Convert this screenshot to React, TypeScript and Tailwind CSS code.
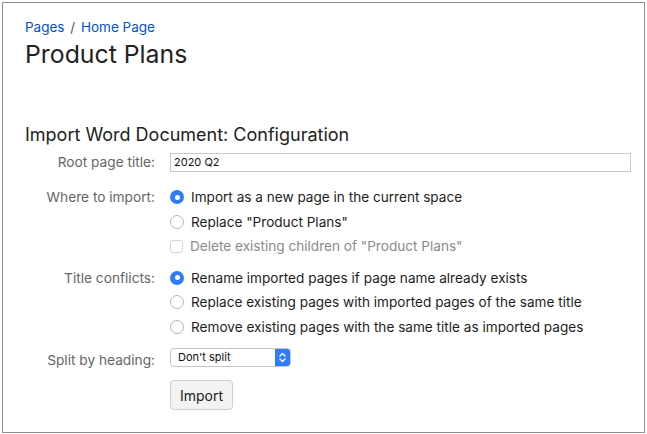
import React from "react";

const font = { fontFamily: "Inter, 'Noto Sans', sans-serif" };

const Radio = ({ checked }: { checked?: boolean }) =>
  checked ? (
    <span className="w-[14px] h-[14px] rounded-full bg-[#2f7cf6] flex items-center justify-center shrink-0">
      <span className="w-[5px] h-[5px] rounded-full bg-white" />
    </span>
  ) : (
    <span className="w-[14px] h-[14px] rounded-full border border-[#b5b5b5] bg-white shrink-0" />
  );

const Option = ({ checked, children }: { checked?: boolean; children: React.ReactNode }) => (
  <div className="flex items-center gap-[7px] h-[24.5px]">
    <Radio checked={checked} />
    <span className="text-[13.6px] text-[#1d1d1d]">{children}</span>
  </div>
);

const Label = ({ children, className = "" }: { children: React.ReactNode; className?: string }) => (
  <div className={`text-[13.7px] text-[#666] text-right ${className}`}>{children}</div>
);

export default function App() {
  return (
    <div className="w-[647px] h-[434px] bg-white p-[2px]" style={font}>
      <div className="h-[431px] w-[643px] border border-[#8f8f8f] pl-[22px] pr-[13px] pt-[15px]">
        <div className="text-[13.5px] text-[#0052cc] leading-[18px]">
          Pages <span className="text-[#555] mx-[2px]">/</span> Home Page
        </div>
        <h1 className="text-[24.8px] text-[#222] leading-[32px] mt-[2px]">Product Plans</h1>

        <h2 className="text-[18px] text-[#222] leading-[24px] mt-[53px]">Import Word Document: Configuration</h2>

        <div className="grid grid-cols-[130px_1fr] gap-x-[15px] mt-[0px]">
          <Label className="leading-[18px] mt-[6px]">Root page title:</Label>
          <div className="mt-[6px]">
            <div className="h-[19px] border border-[#c9c9c9] bg-white text-[11px] leading-[17px] pl-[3px] text-[#111]">
              2020 Q2
            </div>
          </div>

          <Label className="leading-[24.5px] mt-[13px]">Where to import:</Label>
          <div className="mt-[13px]">
            <Option checked>Import as a new page in the current space</Option>
            <Option>Replace "Product Plans"</Option>
            <div className="flex items-center gap-[7px] h-[24.5px]">
              <span className="w-[13px] h-[13px] rounded-[3px] border border-[#d4d4d4] bg-white shrink-0" />
              <span className="text-[13.6px] text-[#8a8a8a]">Delete existing children of "Product Plans"</span>
            </div>
          </div>

          <Label className="leading-[24.5px] mt-[7px]">Title conflicts:</Label>
          <div className="mt-[7px]">
            <Option checked>Rename imported pages if page name already exists</Option>
            <Option>Replace existing pages with imported pages of the same title</Option>
            <Option>Remove existing pages with the same title as imported pages</Option>
          </div>

          <Label className="leading-[19px] mt-[12px]">Split by heading:</Label>
          <div className="mt-[9px]">
            <div className="w-[121px] h-[19px] flex rounded-[4px] border border-[#c6c6c6] bg-white overflow-hidden">
              <span className="flex-1 text-[11px] leading-[17px] pl-[7px] text-[#111]">Don't split</span>
              <span className="w-[15px] bg-[#2f7cf6] flex items-center justify-center">
                <svg width="9" height="13" viewBox="0 0 9 13" fill="none" stroke="white" strokeWidth="1.4" strokeLinecap="round" strokeLinejoin="round">
                  <path d="M2 5 L4.5 2.5 L7 5" />
                  <path d="M2 8 L4.5 10.5 L7 8" />
                </svg>
              </span>
            </div>
          </div>

          <div />
          <div className="mt-[10px]">
            <button className="h-[30px] px-[9px] rounded-[4px] border border-[#cfcfcf] bg-[#f3f3f3] text-[14px] text-[#222]">
              Import
            </button>
          </div>
        </div>
      </div>
    </div>
  );
}
